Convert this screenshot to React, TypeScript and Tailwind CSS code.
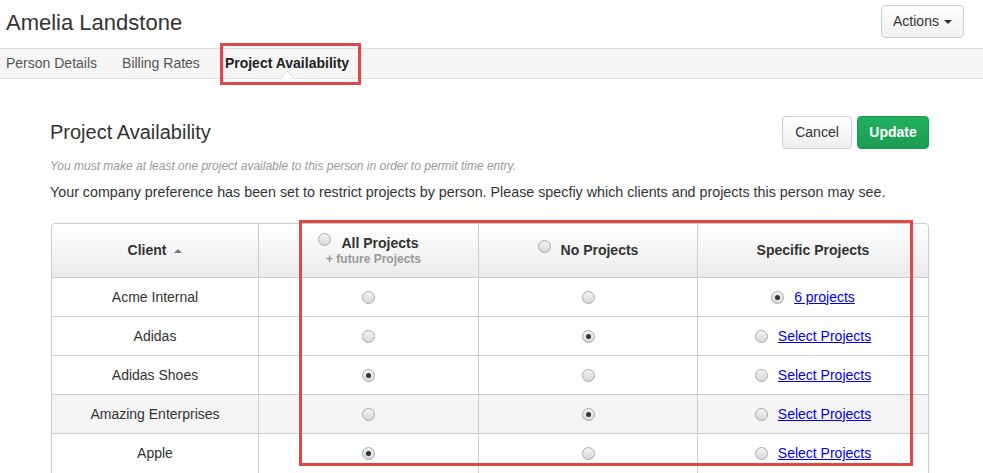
import React from "react"

type Choice = "all" | "none" | "specific"

type Row = {
  client: string
  choice: Choice
  link: string
  shaded?: boolean
}

const rows: Row[] = [
  { client: "Acme Internal", choice: "specific", link: "6 projects" },
  { client: "Adidas", choice: "none", link: "Select Projects" },
  { client: "Adidas Shoes", choice: "all", link: "Select Projects" },
  { client: "Amazing Enterprises", choice: "none", link: "Select Projects", shaded: true },
  { client: "Apple", choice: "all", link: "Select Projects" },
]

function Radio({ checked = false }: { checked?: boolean }) {
  return (
    <span className="inline-flex h-[13px] w-[13px] shrink-0 items-center justify-center rounded-full border border-[#a9a9a9] bg-gradient-to-b from-[#f4f4f4] to-[#d8d8d8]">
      {checked ? <span className="h-[5px] w-[5px] rounded-full bg-[#333]" /> : null}
    </span>
  )
}

export default function App() {
  return (
    <div className="relative h-[473px] w-[983px] overflow-hidden bg-white font-['Liberation_Sans',Arial,sans-serif] text-[#333]">
      {/* Page header */}
      <div className="flex h-[48px] items-start justify-between pl-[6px] pr-[19px]">
        <h1 className="pt-[9px] text-[22px] leading-[28px] text-[#333]">Amelia Landstone</h1>
        <button
          type="button"
          className="mt-[5px] flex h-[33px] w-[83px] items-center justify-center gap-[5px] rounded-[4px] border border-[#ccc] bg-gradient-to-b from-white to-[#f0f0f0] text-[14px] text-[#333]"
        >
          Actions
          <span className="h-0 w-0 border-x-[4px] border-t-[4px] border-x-transparent border-t-[#333]" />
        </button>
      </div>

      {/* Tabs */}
      <div className="flex h-[31px] items-center gap-[25px] border-y border-[#ddd] bg-[#f5f5f5] pl-[6px] text-[14px] text-[#555]">
        <span>Person Details</span>
        <span>Billing Rates</span>
        <span className="relative font-bold text-[#222]">
          Project Availability
          <span className="absolute left-1/2 top-[19px] h-[9px] w-[9px] -translate-x-1/2 rotate-45 border-l border-t border-[#ddd] bg-white" />
        </span>
      </div>
      <div className="pointer-events-none absolute left-[220px] top-[43px] h-[42px] w-[141px] border-[3px] border-[#e04848]" />

      {/* Content */}
      <div className="pl-[50px] pr-[54px]">
        <div className="flex items-start justify-between pt-[37px]">
          <h2 className="pt-[4px] text-[20px] leading-[24px] text-[#333]">Project Availability</h2>
          <div className="flex gap-[5px]">
            <button
              type="button"
              className="h-[33px] w-[70px] rounded-[4px] border border-[#ccc] bg-gradient-to-b from-white to-[#eee] text-[14px] text-[#333]"
            >
              Cancel
            </button>
            <button
              type="button"
              className="h-[33px] w-[72px] rounded-[4px] border border-[#189c4f] bg-gradient-to-b from-[#21b05f] to-[#1a9d52] text-[14px] font-bold text-white"
            >
              Update
            </button>
          </div>
        </div>
        <p className="mt-[10px] text-[12px] italic leading-[15px] text-[#999]">
          You must make at least one project available to this person in order to permit time entry.
        </p>
        <p className="mt-[9px] text-[14.3px] leading-[18px] text-[#333]">
          Your company preference has been set to restrict projects by person. Please specfiy which clients and projects this person may see.
        </p>

        <div className="relative mt-[22px] ml-[1px]">
          <div className="overflow-hidden rounded-t-[4px] border border-[#ccc]">
            <div className="grid h-[54px] grid-cols-[207px_219px_220px_1fr] border-b border-[#ccc] bg-gradient-to-b from-white to-[#ebebeb] text-[14px] font-bold text-[#333]">
              <div className="flex items-center justify-center gap-[8px] border-r border-[#ccc]">
                Client
                <span className="h-0 w-0 border-x-[4px] border-b-[4px] border-x-transparent border-b-[#777]" />
              </div>
              <div className="flex flex-col items-center justify-center leading-[16px]">
                <div className="flex items-center gap-[10px]">
                  <span className="-mt-[4px]">
                    <Radio />
                  </span>
                  <span>All Projects</span>
                </div>
                <span className="ml-[10px] text-[12px] text-[#999]">+ future Projects</span>
              </div>
              <div className="flex items-center justify-center gap-[10px] border-x border-[#ccc]">
                <span className="-mt-[4px]">
                  <Radio />
                </span>
                No Projects
              </div>
              <div className="flex items-center justify-center">Specific Projects</div>
            </div>
            {rows.map((row, i) => (
              <div
                key={row.client}
                className={`grid h-[39px] grid-cols-[207px_219px_220px_1fr] text-[14px] ${
                  i < rows.length - 1 ? "border-b border-[#ccc]" : ""
                } ${row.shaded ? "bg-[#f4f4f4]" : "bg-white"}`}
              >
                <div className="flex items-center justify-center border-r border-[#ccc]">{row.client}</div>
                <div className="flex items-center justify-center">
                  <Radio checked={row.choice === "all"} />
                </div>
                <div className="flex items-center justify-center border-x border-[#ccc]">
                  <Radio checked={row.choice === "none"} />
                </div>
                <div className="flex items-center justify-center gap-[10px]">
                  <Radio checked={row.choice === "specific"} />
                  <a href="#" className="text-[#0000ee] underline">
                    {row.link}
                  </a>
                </div>
              </div>
            ))}
          </div>
          <div className="pointer-events-none absolute left-[248px] top-[-3px] h-[246px] w-[614px] border-[3px] border-[#e04848]" />
        </div>
      </div>
    </div>
  )
}
